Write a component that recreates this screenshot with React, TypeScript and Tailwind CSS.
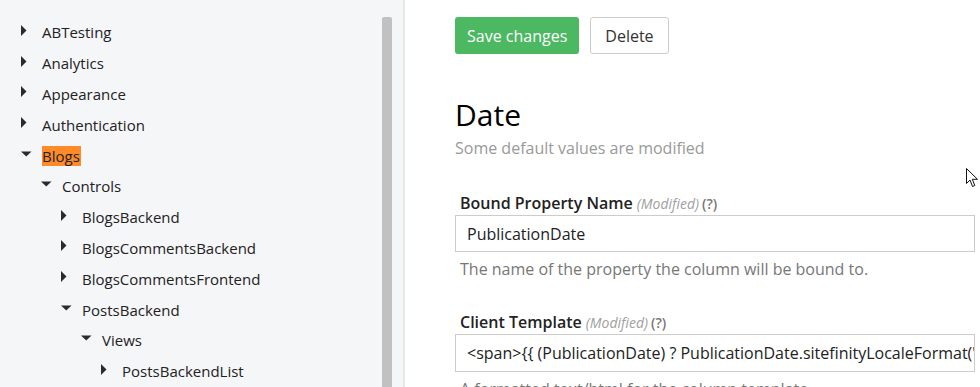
import React from "react";

type Node = { label: string; level: number; open: boolean; selected?: boolean };

const nodes: Node[] = [
  { label: "ABTesting", level: 0, open: false },
  { label: "Analytics", level: 0, open: false },
  { label: "Appearance", level: 0, open: false },
  { label: "Authentication", level: 0, open: false },
  { label: "Blogs", level: 0, open: true, selected: true },
  { label: "Controls", level: 1, open: true },
  { label: "BlogsBackend", level: 2, open: false },
  { label: "BlogsCommentsBackend", level: 2, open: false },
  { label: "BlogsCommentsFrontend", level: 2, open: false },
  { label: "PostsBackend", level: 2, open: true },
  { label: "Views", level: 3, open: true },
  { label: "PostsBackendList", level: 4, open: false },
];

const indents = ["pl-[21px]", "pl-[41px]", "pl-[61px]", "pl-[81px]", "pl-[101px]"];

function Caret({ open }: { open: boolean }) {
  return open ? (
    <svg width="11" height="6" viewBox="0 0 11 6" className="mr-[10px] shrink-0 mt-[-4px]">
      <path d="M0 0.5 L10.5 0.5 L5.25 5.5 Z" fill="#2b2b2b" />
    </svg>
  ) : (
    <svg width="6" height="11" viewBox="0 0 6 11" className="mr-[15px] shrink-0 mt-[-4px]">
      <path d="M0 0 L5.5 5.5 L0 11 Z" fill="#2b2b2b" />
    </svg>
  );
}

export default function App() {
  return (
    <div
      className="relative flex w-[980px] h-[387px] overflow-hidden bg-white text-[#222]"
      style={{ fontFamily: '"Open Sans", "Noto Sans", sans-serif' }}
    >
      {/* Left tree panel */}
      <div className="relative w-[405px] shrink-0 h-full bg-[#f5f6f8] border-r-2 border-[#e6e7e9]">
        <div className="pt-[17px]">
          {nodes.map((n, i) => (
            <div
              key={i}
              className={`flex items-center h-[30.8px] text-[15px] ${indents[n.level]}`}
            >
              <Caret open={n.open} />
              <span
                className={
                  n.selected
                    ? "bg-[#ff8a2a] leading-[20px] h-[20px] pr-[1px] text-[#222]"
                    : "leading-[20px] text-[#222]"
                }
              >
                {n.label}
              </span>
            </div>
          ))}
        </div>
        <div className="absolute left-[382px] top-[17px] w-[10px] h-[380px] bg-[#c1c1c1] rounded-t-[2px]" />
      </div>

      {/* Right content panel */}
      <div className="flex-1 pl-[50px] pt-[17px]">
        <div className="flex gap-[11px]">
          <button className="h-[37px] px-[12px] bg-[#4cb862] text-white text-[16px] rounded-[3px]">
            Save changes
          </button>
          <button className="h-[37px] px-[14px] bg-white border border-[#cccccc] text-[#333] text-[16px] rounded-[3px]">
            Delete
          </button>
        </div>

        <h1 className="mt-[41px] text-[30px] leading-[40px] text-black">Date</h1>
        <p className="mt-[2px] text-[16px] leading-[22px] text-[#999]">
          Some default values are modified
        </p>

        <div className="mt-[34px]">
          <div className="text-[16px] leading-[20px] font-semibold text-[#222] pl-[5px]">
            Bound Property Name{" "}
            <span className="italic font-normal text-[14px] text-[#a0a0a0]">(Modified)</span>
            <span className="font-semibold text-[14px] text-[#777] ml-[3px]">(?)</span>
          </div>
          <div className="mt-[1px] w-[520px] h-[37px] border border-[#cccccc] flex items-center pl-[11px] text-[16px] text-[#222] overflow-hidden whitespace-nowrap">
            PublicationDate
          </div>
          <p className="mt-[6px] pl-[5px] text-[16px] leading-[22px] text-[#777]">
            The name of the property the column will be bound to.
          </p>
        </div>

        <div className="mt-[32px]">
          <div className="text-[16px] leading-[20px] font-semibold text-[#222] pl-[5px]">
            Client Template{" "}
            <span className="italic font-normal text-[14px] text-[#a0a0a0]">(Modified)</span>
            <span className="font-semibold text-[14px] text-[#777] ml-[3px]">(?)</span>
          </div>
          <div className="mt-[1px] w-[520px] h-[38px] border border-[#cccccc] flex items-center pl-[11px] text-[16px] text-[#222] overflow-hidden whitespace-nowrap">
            {"<span>{{ (PublicationDate) ? PublicationDate.sitefinityLocaleFormat('dd MMM, yyyy') : '' }}</span>"}
          </div>
          <p className="mt-[6px] pl-[5px] text-[16px] leading-[22px] text-[#777] whitespace-nowrap">
            A formatted text/html for the column template.
          </p>
        </div>
      </div>

      {/* mouse cursor */}
      <svg
        className="absolute left-[966px] top-[168px]"
        width="13"
        height="20"
        viewBox="0 0 13 20"
      >
        <path
          d="M0.5 0.5 L0.5 15.5 L4 12 L6.5 18.5 L8.8 17.5 L6.3 11.3 L11.5 11.3 Z"
          fill="white"
          stroke="#111"
          strokeWidth="1"
          strokeLinejoin="round"
        />
      </svg>
    </div>
  );
}
